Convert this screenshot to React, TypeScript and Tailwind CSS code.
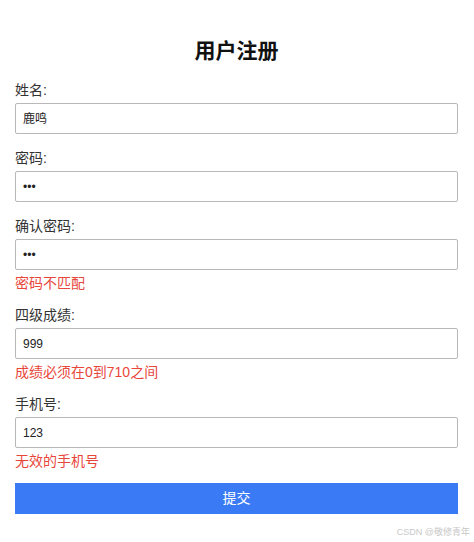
import React from "react";

const font = { fontFamily: '"Liberation Sans", "Noto Sans CJK SC", sans-serif' };

function Field({ label, value, error }: { label: string; value: string; error?: string }) {
  return (
    <div className="mb-[14px]">
      <div className="h-[20px] text-[14px] leading-[20px] text-[#333]">{label}</div>
      <div className="mt-[3px] flex h-[31px] items-center rounded-[2px] border border-[#b8b8b8] bg-white px-[7px] text-[12px] text-[#222]">
        {value}
      </div>
      {error && (
        <div className="mt-[5px] h-[16px] text-[14px] leading-[16px] text-[#e8463a]">{error}</div>
      )}
    </div>
  );
}

export default function App() {
  return (
    <div className="relative h-[542px] w-[474px] bg-white" style={font}>
      <div className="px-[15px] pr-[16px] pt-[37px]">
        <h2 className="mb-[15px] h-[28px] text-center text-[21px] font-bold leading-[28px] text-[#111]">用户注册</h2>
        <Field label="姓名:" value="鹿鸣" />
        <Field label="密码:" value="•••" />
        <Field label="确认密码:" value="•••" error="密码不匹配" />
        <Field label="四级成绩:" value="999" error="成绩必须在0到710之间" />
        <Field label="手机号:" value="123" error="无效的手机号" />
        <div className="flex h-[31px] items-center justify-center bg-[#3a7bf5] text-[14px] text-white">提交</div>
      </div>
      <div className="absolute bottom-[4px] right-[4px] text-[9px] leading-[12px] text-[#c8c8c8]">CSDN @敬修青年</div>
    </div>
  );
}
